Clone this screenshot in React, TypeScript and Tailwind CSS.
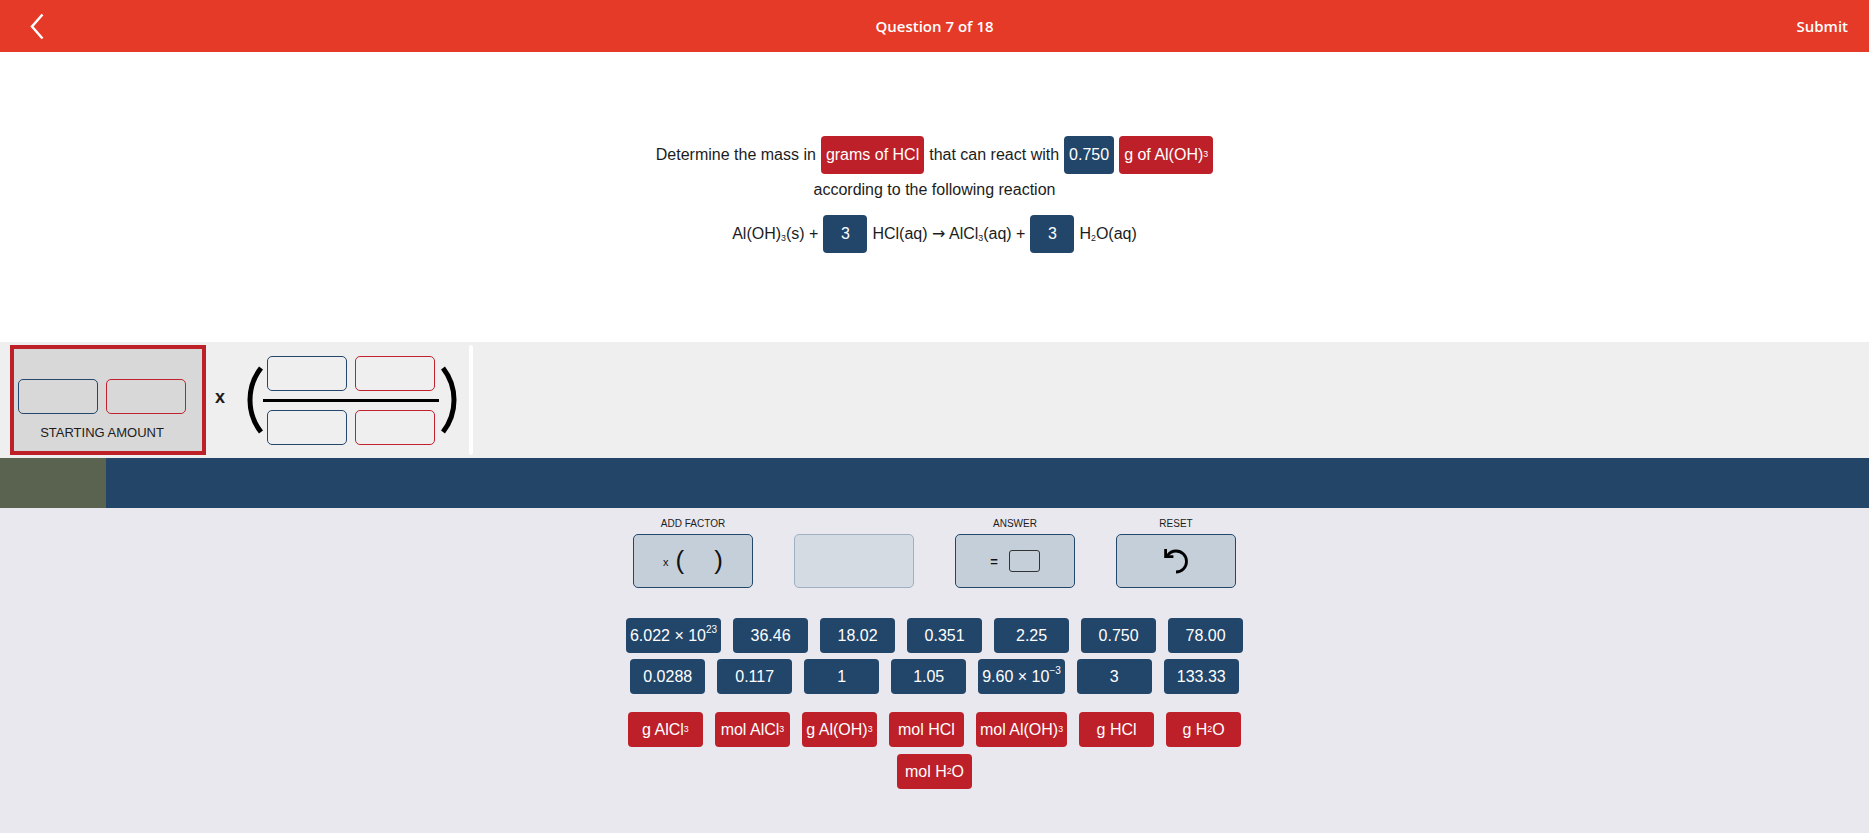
import type { ReactNode } from 'react';

// Small chemistry subscript used in formulas
function Sub({ children }: { children: ReactNode }) {
    return <span className="text-[0.55em] align-[-0.2em]">{children}</span>;
}

function QChip({ tone, children }: { tone: 'red' | 'blue'; children: ReactNode }) {
    return (
        <span
            className={
                tone === 'red'
                    ? 'inline-flex items-center justify-center h-[38px] min-w-[44px] px-[5px] rounded-[4px] bg-[#bd2029] text-white'
                    : 'inline-flex items-center justify-center h-[38px] min-w-[44px] px-[5px] rounded-[4px] bg-[#22456a] text-white'
            }
        >
            {children}
        </span>
    );
}

function Chip({ tone, children }: { tone: 'red' | 'blue'; children: ReactNode }) {
    return (
        <div
            className={
                tone === 'red'
                    ? 'flex items-center justify-center h-[35px] min-w-[75px] px-[4px] rounded-[4px] bg-[#bd2029] text-white text-[16px] whitespace-nowrap'
                    : 'flex items-center justify-center h-[35px] min-w-[75px] px-[4px] rounded-[4px] bg-[#22456a] text-white text-[16px] whitespace-nowrap'
            }
        >
            {children}
        </div>
    );
}

function Slot({ tone }: { tone: 'red' | 'blue' }) {
    return (
        <div
            className={
                tone === 'red'
                    ? 'w-[80px] h-[35px] rounded-[5px] border border-[#c0222c]'
                    : 'w-[80px] h-[35px] rounded-[5px] border border-[#24476b]'
            }
        />
    );
}

function Paren({ side }: { side: 'left' | 'right' }) {
    return (
        <svg width="16" height="68" viewBox="0 0 16 68" className="shrink-0">
            <path
                d={side === 'left' ? 'M14 2 A52 52 0 0 0 14 66' : 'M2 2 A52 52 0 0 1 2 66'}
                fill="none"
                stroke="#000"
                strokeWidth="5"
            />
        </svg>
    );
}

const NUMBERS: ReactNode[] = [
    <>6.022 × 10<sup className="text-[10px] -top-[0.6em]">23</sup></>,
    '36.46',
    '18.02',
    '0.351',
    '2.25',
    '0.750',
    '78.00',
    '0.0288',
    '0.117',
    '1',
    '1.05',
    <>9.60 × 10<sup className="text-[10px] -top-[0.6em]">−3</sup></>,
    '3',
    '133.33',
];

const UNITS: ReactNode[] = [
    <>g AlCl<Sub>3</Sub></>,
    <>mol AlCl<Sub>3</Sub></>,
    <>g Al(OH)<Sub>3</Sub></>,
    'mol HCl',
    <>mol Al(OH)<Sub>3</Sub></>,
    'g HCl',
    <>g H<Sub>2</Sub>O</>,
    <>mol H<Sub>2</Sub>O</>,
];

export default function App() {
    return (
        <div className="h-screen flex flex-col bg-white text-[#1c1c1c]" style={{ fontFamily: '"Liberation Sans", Arial, sans-serif' }}>
            {/* top bar */}
            <header
                className="h-[52px] shrink-0 grid grid-cols-[1fr_auto_1fr] items-center bg-[#e53a27] text-white"
                style={{ fontFamily: '"Open Sans", sans-serif' }}
            >
                <div className="pl-[30px] flex items-center">
                    <svg width="14" height="27" viewBox="0 0 14 27">
                        <polyline points="12.5,1.5 2,13.5 12.5,25.5" fill="none" stroke="#fff" strokeWidth="2.5" />
                    </svg>
                </div>
                <div className="text-[15px] font-semibold">Question 7 of 18</div>
                <div className="pr-[21px] text-right text-[15px] font-semibold">Submit</div>
            </header>

            {/* question */}
            <section className="h-[290px] shrink-0 flex flex-col items-center pt-[84px] text-[16px]">
                <div className="flex items-center gap-[5px] h-[38px]">
                    <span>Determine the mass in</span>
                    <QChip tone="red">grams of HCl</QChip>
                    <span>that can react with</span>
                    <QChip tone="blue">0.750</QChip>
                    <QChip tone="red">
                        g of Al(OH)<Sub>3</Sub>
                    </QChip>
                </div>
                <div className="mt-[7px] leading-[18px]">according to the following reaction</div>
                <div className="mt-[16px] flex items-center gap-[5px] h-[38px]">
                    <span>
                        Al(OH)<Sub>3</Sub>(s) +
                    </span>
                    <QChip tone="blue">3</QChip>
                    <span>
                        HCl(aq) <span style={{ fontFamily: '"DejaVu Sans", sans-serif' }}>→</span> AlCl<Sub>3</Sub>(aq) +
                    </span>
                    <QChip tone="blue">3</QChip>
                    <span>
                        H<Sub>2</Sub>O(aq)
                    </span>
                </div>
            </section>

            {/* calculation tray */}
            <section className="h-[116px] shrink-0 flex items-center bg-[#efefef] pl-[10px]">
                <div className="w-[196px] h-[110px] border-4 border-[#be2028] bg-[#d8d8d8] pt-[30px]">
                    <div className="w-[168px] ml-[4px] flex flex-col items-center">
                        <div className="flex gap-[8px]">
                            <Slot tone="blue" />
                            <Slot tone="red" />
                        </div>
                        <div className="mt-[11px] text-[13px] leading-[15px]">STARTING AMOUNT</div>
                    </div>
                </div>
                <div className="ml-[9px] text-[18px] font-bold leading-none pb-[6px]">x</div>
                <div className="ml-[22px] flex items-center">
                    <Paren side="left" />
                    <div className="w-[176px] flex flex-col">
                        <div className="flex gap-[8px] px-[4px]">
                            <Slot tone="blue" />
                            <Slot tone="red" />
                        </div>
                        <div className="h-[3px] bg-black my-[8px]" />
                        <div className="flex gap-[8px] px-[4px]">
                            <Slot tone="blue" />
                            <Slot tone="red" />
                        </div>
                    </div>
                    <div className="ml-[2px]">
                        <Paren side="right" />
                    </div>
                </div>
                <div className="ml-[12px] w-[4px] h-[110px] bg-white rounded-[2px]" />
            </section>

            {/* progress strip */}
            <div className="h-[50px] shrink-0 flex bg-[#224568]">
                <div className="w-[106px] bg-[#5a634f]" />
            </div>

            {/* controls */}
            <section className="flex-1 bg-[#e9e8ee] flex flex-col items-center pt-[10px]">
                <div className="flex gap-[41px]">
                    <div className="flex flex-col items-center">
                        <div className="h-[12px] text-[10px] leading-[12px] mb-[4px]">ADD FACTOR</div>
                        <button className="w-[120px] h-[54px] rounded-[5px] border border-[#23476a] bg-[#c5cfd9] flex items-center justify-center text-[#111]">
                            <span className="text-[11px] mr-[7px] mt-[3px]">x</span>
                            <span className="text-[26px] leading-none pb-[2px]">(</span>
                            <span className="w-[30px]" />
                            <span className="text-[26px] leading-none pb-[2px]">)</span>
                        </button>
                    </div>
                    <div className="flex flex-col items-center">
                        <div className="h-[12px] mb-[4px]" />
                        <div className="w-[120px] h-[54px] rounded-[5px] border border-[#9fb0c2] bg-[#d5dbe3]" />
                    </div>
                    <div className="flex flex-col items-center">
                        <div className="h-[12px] text-[10px] leading-[12px] mb-[4px]">ANSWER</div>
                        <button className="w-[120px] h-[54px] rounded-[5px] border border-[#23476a] bg-[#c5cfd9] flex items-center justify-center gap-[11px] text-[#111]">
                            <span className="text-[13px] font-bold leading-none">=</span>
                            <span className="w-[31px] h-[22px] rounded-[3px] border border-[#333]" />
                        </button>
                    </div>
                    <div className="flex flex-col items-center">
                        <div className="h-[12px] text-[10px] leading-[12px] mb-[4px]">RESET</div>
                        <button className="w-[120px] h-[54px] rounded-[5px] border border-[#23476a] bg-[#c5cfd9] flex items-center justify-center">
                            <svg width="24" height="26" viewBox="0 0 24 26" fill="none" stroke="#000" strokeWidth="2.8">
                                <path d="M12 24 A10.5 10.5 0 0 0 12 3 C8.4 3 5.4 4.8 3.4 7.8" />
                                <path d="M1.6 1 V8.6 H9.4" />
                            </svg>
                        </button>
                    </div>
                </div>

                <div className="mt-[30px] w-[640px] flex flex-wrap justify-center gap-x-[12px] gap-y-[6px]">
                    {NUMBERS.map((n, i) => (
                        <Chip key={i} tone="blue">
                            {n}
                        </Chip>
                    ))}
                </div>
                <div className="mt-[18px] w-[640px] flex flex-wrap justify-center gap-x-[12px] gap-y-[7px]">
                    {UNITS.map((u, i) => (
                        <Chip key={i} tone="red">
                            {u}
                        </Chip>
                    ))}
                </div>
            </section>
        </div>
    );
}
